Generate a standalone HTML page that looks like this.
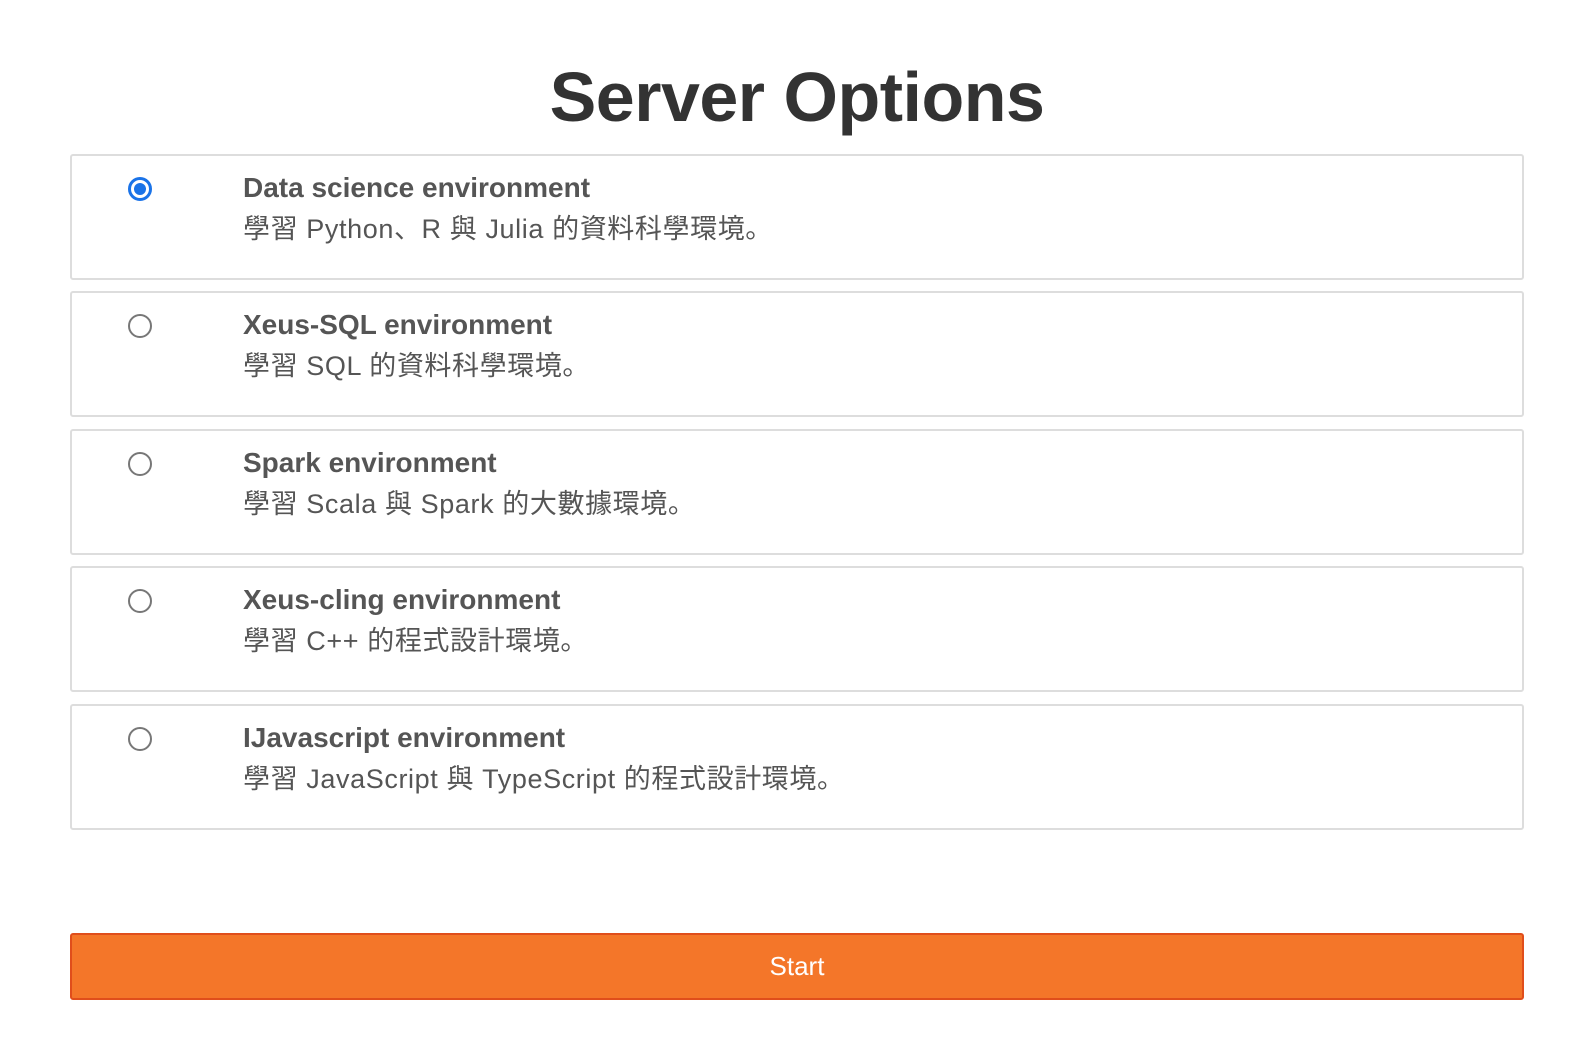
<!DOCTYPE html>
<html><head><meta charset="utf-8"><style>
body{margin:0;background:#fff;width:1574px;height:1042px;overflow:hidden;font-family:"Liberation Sans","Noto Sans CJK JP",sans-serif;color:#555}
h1{position:absolute;top:52px;left:0;width:1594px;margin:0;text-align:center;font-size:70px;font-weight:bold;color:#333;line-height:90px;letter-spacing:-0.5px}
.box{position:absolute;left:70px;width:1450px;height:122px;border:2px solid #ddd;border-radius:3px;box-sizing:content-box}
.r{position:absolute;left:56px;top:21px;width:24px;height:24px;border:2px solid #777;border-radius:50%;box-sizing:border-box}
.r.on{border:3px solid #1a73e8;}
.r.on::after{content:"";position:absolute;left:3px;top:3px;width:12px;height:12px;border-radius:50%;background:#1a73e8}
.t{position:absolute;left:171px;top:15px;font-size:28px;font-weight:bold;line-height:34px}
.s{position:absolute;left:171px;top:56px;font-size:27px;line-height:34px;letter-spacing:0.6px}
.btn{position:absolute;left:70px;top:933px;width:1450px;height:63px;background:#f47629;border:2px solid #e04e1b;border-radius:3px;color:#fff;font-size:26px;text-align:center;line-height:63px}
</style></head><body>
<h1>Server Options</h1>
<div class="box" style="top:154px"><div class="r on"></div><div class="t">Data science environment</div><div class="s">學習 Python、R 與 Julia 的資料科學環境。</div></div>
<div class="box" style="top:291px"><div class="r"></div><div class="t">Xeus-SQL environment</div><div class="s">學習 SQL 的資料科學環境。</div></div>
<div class="box" style="top:429px"><div class="r"></div><div class="t">Spark environment</div><div class="s">學習 Scala 與 Spark 的大數據環境。</div></div>
<div class="box" style="top:566px"><div class="r"></div><div class="t">Xeus-cling environment</div><div class="s">學習 C++ 的程式設計環境。</div></div>
<div class="box" style="top:704px"><div class="r"></div><div class="t">IJavascript environment</div><div class="s">學習 JavaScript 與 TypeScript 的程式設計環境。</div></div>
<div class="btn">Start</div>
</body></html>
